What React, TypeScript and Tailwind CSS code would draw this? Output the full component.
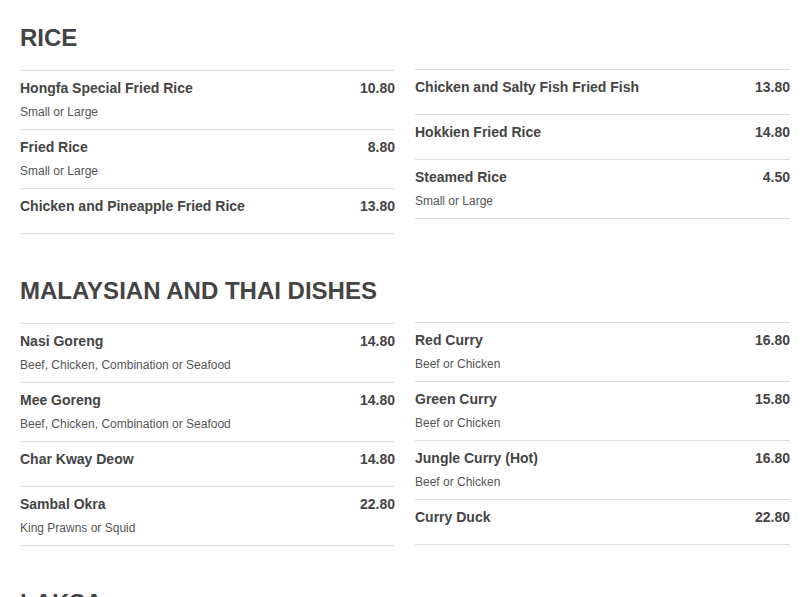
import React from "react";

type Item = { name: string; price: string; desc?: string };
type Section = { title: string; left: Item[]; right: Item[] };

const sections: Section[] = [
  {
    title: "RICE",
    left: [
      { name: "Hongfa Special Fried Rice", price: "10.80", desc: "Small or Large" },
      { name: "Fried Rice", price: "8.80", desc: "Small or Large" },
      { name: "Chicken and Pineapple Fried Rice", price: "13.80" },
    ],
    right: [
      { name: "Chicken and Salty Fish Fried Fish", price: "13.80" },
      { name: "Hokkien Fried Rice", price: "14.80" },
      { name: "Steamed Rice", price: "4.50", desc: "Small or Large" },
    ],
  },
  {
    title: "MALAYSIAN AND THAI DISHES",
    left: [
      { name: "Nasi Goreng", price: "14.80", desc: "Beef, Chicken, Combination or Seafood" },
      { name: "Mee Goreng", price: "14.80", desc: "Beef, Chicken, Combination or Seafood" },
      { name: "Char Kway Deow", price: "14.80" },
      { name: "Sambal Okra", price: "22.80", desc: "King Prawns or Squid" },
    ],
    right: [
      { name: "Red Curry", price: "16.80", desc: "Beef or Chicken" },
      { name: "Green Curry", price: "15.80", desc: "Beef or Chicken" },
      { name: "Jungle Curry (Hot)", price: "16.80", desc: "Beef or Chicken" },
      { name: "Curry Duck", price: "22.80" },
    ],
  },
  {
    title: "LAKSA",
    left: [],
    right: [],
  },
];

const MenuItem = ({ item }: { item: Item }) => (
  <div className="border-t border-[#dddddd] pt-[7px] pb-[9px]">
    <div className="flex justify-between text-[14px] leading-[20px] font-bold text-[#444444]">
      <span>{item.name}</span>
      <span>{item.price}</span>
    </div>
    {item.desc ? (
      <p className="mt-[7px] text-[12px] leading-[15px] text-[#555555]">{item.desc}</p>
    ) : (
      <div className="h-2" />
    )}
  </div>
);

const App = () => {
  return (
    <div
      className="min-h-screen bg-white pl-5 pr-[14px] pb-10"
      style={{ fontFamily: '"Liberation Sans", Arial, Helvetica, sans-serif' }}
    >
      {sections.map((s) => (
        <section key={s.title} className="pt-6 pb-[19px]">
          <h2 className="text-[24px] leading-[28px] font-bold text-[#444444] mb-[18px]">
            {s.title}
          </h2>
          <div className="grid grid-cols-2 gap-5 items-start">
            {/* left column */}
            <div className="border-b border-[#dddddd]">
              {s.left.map((it) => (
                <MenuItem key={it.name} item={it} />
              ))}
            </div>
            {/* right column sits a pixel higher in the original */}
            <div className="-mt-px border-b border-[#dddddd]">
              {s.right.map((it) => (
                <MenuItem key={it.name} item={it} />
              ))}
            </div>
          </div>
        </section>
      ))}
    </div>
  );
};

export default App;
